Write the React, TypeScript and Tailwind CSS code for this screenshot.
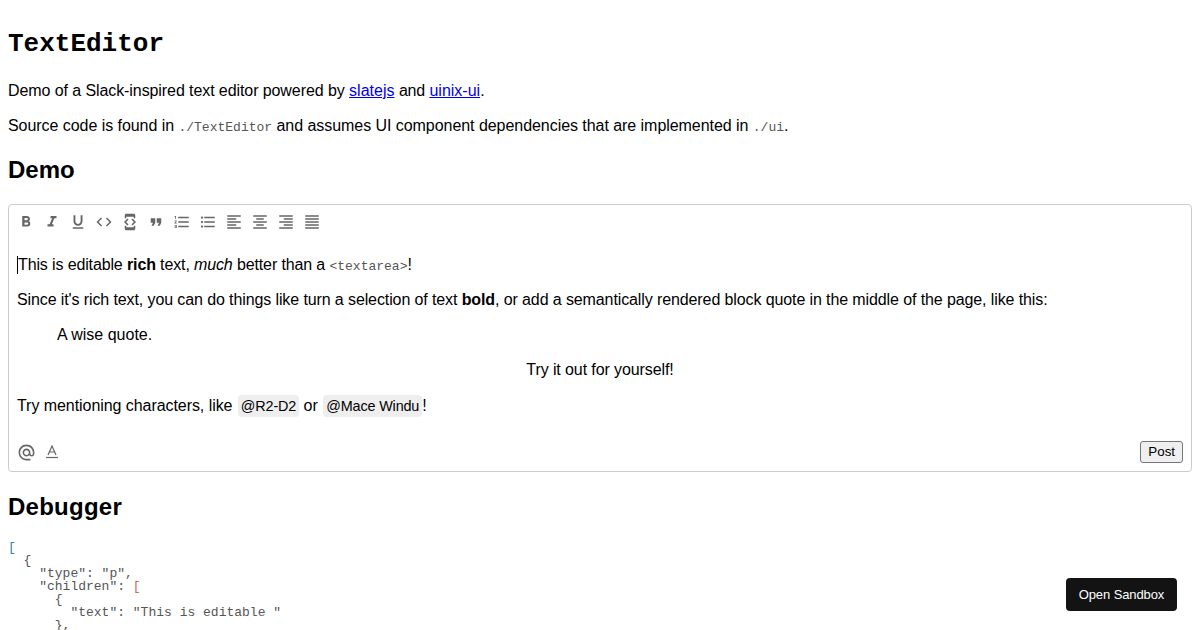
import React from "react";
import {
  MdFormatBold,
  MdFormatItalic,
  MdFormatUnderlined,
  MdCode,
  MdDeveloperMode,
  MdFormatQuote,
  MdFormatListNumbered,
  MdFormatListBulleted,
  MdFormatAlignLeft,
  MdFormatAlignCenter,
  MdFormatAlignRight,
  MdFormatAlignJustify,
  MdAlternateEmail,
} from "react-icons/md";

const Code = ({ children }: { children: React.ReactNode }) => (
  <code className="font-['Liberation_Mono',monospace] text-[13px] leading-none tracking-normal text-[#555]">{children}</code>
);

const Mention = ({ children }: { children: React.ReactNode }) => (
  <span className="ml-px inline-block rounded bg-[#eee] px-[3px] py-[2px] text-[14.4px] leading-[18px] tracking-[-0.15px]">{children}</span>
);

const toolbar = [
  MdFormatBold,
  MdFormatItalic,
  MdFormatUnderlined,
  MdCode,
  MdDeveloperMode,
  MdFormatQuote,
  MdFormatListNumbered,
  MdFormatListBulleted,
  MdFormatAlignLeft,
  MdFormatAlignCenter,
  MdFormatAlignRight,
  MdFormatAlignJustify,
];

const App = () => {
  return (
    <div className="h-[630px] overflow-hidden bg-white px-2 font-['Liberation_Sans',sans-serif] text-base leading-[18px] text-black">
      {/* Header */}
      <h1 className="pt-[31px] font-['Liberation_Mono',monospace] text-[26px] font-bold leading-[27px]">TextEditor</h1>
      <p className="mt-[24px]">
        <span className="tracking-[-0.085px]">Demo of a Slack-inspired text editor powered by</span>{" "}
        <a href="#" className="text-[#00e] underline">slatejs</a> <span className="tracking-[-0.2px]">and</span>{" "}
        <a href="#" className="text-[#00e] underline">uinix-ui</a>.
      </p>
      <p className="mt-[17px] tracking-[-0.05px]">
        Source code is found in <Code>./TextEditor</Code> and assumes UI component dependencies that are implemented in{" "}
        <Code>./ui</Code>.
      </p>
      <h2 className="mt-[21px] text-2xl font-bold leading-[27px]">Demo</h2>

      {/* Editor */}
      <div className="mt-[21px] flex h-[268px] flex-col rounded border border-[#ccc] px-2 pb-2 pt-[7px]">
        <div className="flex h-[20px] items-center gap-[8px] text-[#666]">
          {toolbar.map((Icon, i) => (
            <Icon key={i} size={18} />
          ))}
        </div>
        <div className="mt-[24px] flex flex-col gap-[17px]">
          <p className="border-l border-black tracking-[-0.13px]">
            This is editable <b>rich</b> text, <i>much</i> better than a <Code>&lt;textarea&gt;</Code>!
          </p>
          <p className="tracking-[-0.107px]">
            Since it's rich text, you can do things like turn a selection of text <b>bold</b>, or add a semantically
            rendered block quote in the middle of the page, like this:
          </p>
          <blockquote className="pl-10">A wise quote.</blockquote>
          <p className="text-center tracking-[-0.1px]">Try it out for yourself!</p>
          <p className="-mt-px">
            <span className="tracking-[-0.06px]">Try mentioning characters, like</span> <Mention>@R2-D2</Mention> or{" "}
            <Mention>@Mace Windu</Mention>!
          </p>
        </div>
        <div className="mt-auto flex items-center justify-between">
          <div className="flex items-center gap-[9px] text-[#666]">
            <MdAlternateEmail size={19} />
            <svg width="14" height="14" viewBox="0 0 14 14" fill="none" stroke="currentColor" strokeWidth="1.2">
              <path d="M3 10 7 1l4 9M4.4 7h5.2" />
              <path d="M1 12.5h12" />
            </svg>
          </div>
          <button type="button" className="h-[22px] rounded-[3px] border border-[#767676] bg-[#efefef] px-[7px] text-[13.33px] leading-none">
            Post
          </button>
        </div>
      </div>

      <h2 className="mt-[21px] text-2xl font-bold leading-[27px] tracking-[0.25px]">Debugger</h2>
      <pre className="mt-[21px] font-['Liberation_Mono',monospace] text-[13px] leading-[13px] text-[#555]">
        <span className="text-[#2a86a8]">[</span>{"\n"}
        {"  {\n"}
        {'    "type": "p",\n'}
        {'    "children": '}<span className="text-[#c56a5a]">[</span>{"\n"}
        {"      {\n"}
        {'        "text": "This is editable "\n'}
        {"      },\n"}
      </pre>

      {/* Floating sandbox button */}
      <button type="button" className="fixed bottom-[19px] right-[23px] h-[33px] w-[111px] rounded bg-[#131313] text-[13px] tracking-[-0.1px] text-white">
        Open Sandbox
      </button>
    </div>
  );
};

export default App;
